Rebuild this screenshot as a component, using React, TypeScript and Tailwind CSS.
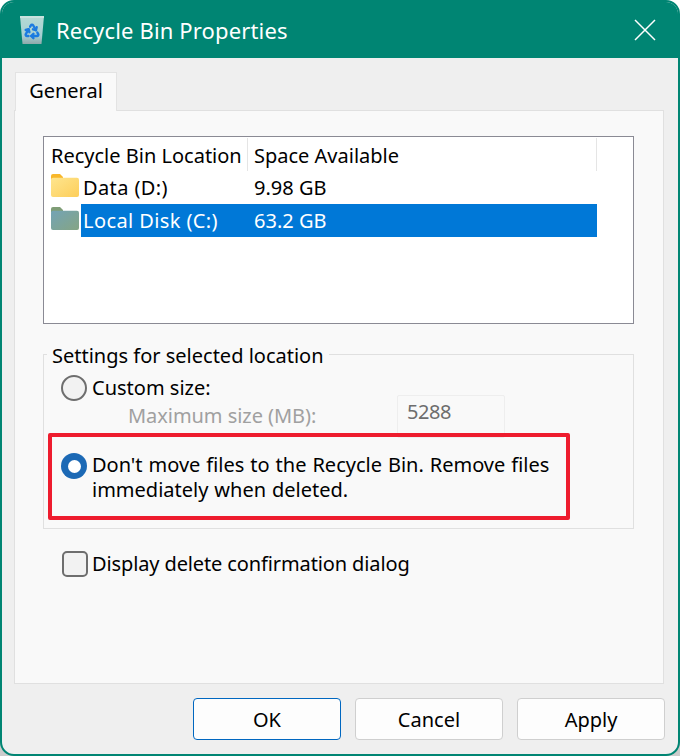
import React from 'react';

const FONT = "font-['Noto_Sans','Open_Sans',sans-serif]";

function BinIcon() {
  return (
    <svg width="26" height="30" viewBox="0 0 26 30" className="shrink-0">
      <defs>
        <linearGradient id="bin" x1="0" y1="0" x2="0" y2="1">
          <stop offset="0" stopColor="#b5dad5" />
          <stop offset="0.7" stopColor="#a6cfd3" />
          <stop offset="1" stopColor="#8fa9aa" />
        </linearGradient>
      </defs>
      <path d="M1 1h24l-2.500 28h-19z" fill="url(#bin)" />
      <path d="M1 1h24v2H1z" fill="#c8e2de" />
      <g
        transform="translate(4.500 7.500) scale(0.71)"
        fill="none"
        stroke="#1b7be0"
        strokeWidth="3.400"
        strokeLinecap="round"
        strokeLinejoin="round"
      >
        <path d="M7 19H4.815a1.830 1.830 0 0 1-1.570-.881 1.785 1.785 0 0 1-.004-1.784L7.196 9.500" />
        <path d="M11 19h8.203a1.830 1.830 0 0 0 1.556-.890 1.784 1.784 0 0 0 0-1.775l-1.226-2.120" />
        <path d="m14 16-3 3 3 3" />
        <path d="M8.293 13.596 7.196 9.500 3.100 10.598" />
        <path d="m9.344 5.811 1.093-1.892A1.830 1.830 0 0 1 11.985 3a1.784 1.784 0 0 1 1.546.888l3.943 6.843" />
        <path d="m13.378 9.633 4.096 1.098 1.097-4.096" />
      </g>
    </svg>
  );
}

function FolderIcon({ selected }: { selected?: boolean }) {
  const id = selected ? 'folderSel' : 'folderNorm';
  return (
    <svg
      width="28"
      height="23"
      viewBox="0 0 28 24"
      preserveAspectRatio="none"
      className="-mt-[4px] shrink-0"
    >
      <defs>
        <linearGradient id={id} x1="0" y1="0" x2="1" y2="1">
          <stop offset="0" stopColor={selected ? '#73a3b5' : '#fee58e'} />
          <stop offset="1" stopColor={selected ? '#85a584' : '#fdce5a'} />
        </linearGradient>
      </defs>
      <path
        d="M0 2a2 2 0 0 1 2-2h7l3 3v3H0z"
        fill={selected ? '#7f9d76' : '#f8b72a'}
      />
      <path
        d="M0 6a2 2 0 0 1 2-2h24a2 2 0 0 1 2 2v16a2 2 0 0 1-2 2H2a2 2 0 0 1-2-2z"
        fill={`url(#${id})`}
      />
    </svg>
  );
}

function ListRow({
  name,
  space,
  selected,
}: {
  name: string;
  space: string;
  selected?: boolean;
}) {
  return (
    <div className="flex h-[33px] items-center pl-[7px]">
      <FolderIcon selected={selected} />
      <div
        className={`ml-[2px] flex h-[33px] w-[516px] items-center pl-[2px] ${
          selected ? 'bg-[#0078d7] text-white' : 'text-black'
        }`}
      >
        <span className="w-[171px] whitespace-nowrap tracking-[0.4px]">
          {name}
        </span>
        <span className="whitespace-nowrap">{space}</span>
      </div>
    </div>
  );
}

function DialogButton({
  label,
  primary,
}: {
  label: string;
  primary?: boolean;
}) {
  return (
    <button
      type="button"
      className={`h-[42px] w-[148px] rounded-[4px] border bg-[#fdfdfd] pt-px text-black ${
        primary ? 'border-[#0067c0]' : 'border-[#cfcfcf]'
      }`}
    >
      {label}
    </button>
  );
}

export default function App() {
  return (
    <div
      className={`h-[756px] w-[680px] overflow-hidden bg-[linear-gradient(#ffffff_0%,#ffffff_50%,#cccccc_50%,#cccccc_100%)] text-[20px] leading-[28px] ${FONT}`}
    >
      <div className="flex h-[756px] flex-col overflow-hidden rounded-[14px] border-2 border-[#008573] bg-[#efefef]">
        {/* title bar */}
        <div className="flex h-[56px] shrink-0 items-center bg-[#008573] pl-[17px] pr-[22px] text-white">
          <BinIcon />
          <span className="ml-[11px] text-[22px] tracking-[0.15px]">
            Recycle Bin Properties
          </span>
          <svg
            width="22"
            height="22"
            viewBox="0 0 22 22"
            className="ml-auto"
            stroke="#ffffff"
            strokeWidth="1.500"
          >
            <path d="M1 1l20 20M21 1L1 21" />
          </svg>
        </div>

        <div className="flex flex-1 flex-col pl-[12px] pr-[14px] pt-[14px]">
          {/* tab strip */}
          <div className="flex h-[38px]">
            <div className="relative z-10 ml-px flex h-[39px] w-[102px] items-center justify-center border border-b-0 border-[#e3e3e3] bg-[#f9f9f9] pb-[2px] text-black">
              General
            </div>
          </div>

          {/* tab page */}
          <div className="h-[574px] w-[650px] border border-[#e0e0e0] bg-[#f9f9f9] pl-[28px] pt-[25px]">
            <div className="h-[188px] w-[591px] border border-[#8a8a94] bg-white text-black">
              <div className="flex h-[34px] items-center">
                <span className="w-[203px] whitespace-nowrap pl-[7px] pt-[3px]">
                  Recycle Bin Location
                </span>
                <span className="h-[33px] w-px bg-[#e5e5e5]" />
                <span className="w-[348px] whitespace-nowrap pl-[6px] pt-[3px]">
                  Space Available
                </span>
                <span className="h-[33px] w-px bg-[#e5e5e5]" />
              </div>
              <ListRow name="Data (D:)" space="9.98 GB" />
              <ListRow name="Local Disk (C:)" space="63.2 GB" selected />
            </div>

            {/* settings group */}
            <div className="relative mt-[30px] h-[175px] w-[591px] border border-[#e0e0e0] px-[17px] text-black">
              <span className="absolute left-[3px] top-[-13px] whitespace-nowrap bg-[#f9f9f9] px-[5px]">
                Settings for selected location
              </span>
              <div className="mt-[20px] flex h-[26px] items-center">
                <span className="size-[26px] shrink-0 rounded-full border-2 border-[#6e6e6e] bg-[#f2f2f2]" />
                <span className="ml-[5px] whitespace-nowrap">Custom size:</span>
              </div>
              <div className="flex h-[43px] items-start">
                <span className="ml-[67px] mt-[1px] w-[269px] whitespace-nowrap tracking-[-0.05px] text-[#a0a0a0]">
                  Maximum size (MB):
                </span>
                <div className="-mt-[6px] h-[43px] w-[108px] shrink-0 rounded-[2px] border border-[#eeeeee] pl-[9px] pt-[2px] tracking-[-0.4px] text-[#6d6d6d]">
                  5288
                </div>
              </div>
              <div className="mt-[8px] flex">
                <span className="mt-[1px] flex size-[26px] shrink-0 items-center justify-center rounded-full bg-[#1c69b5]">
                  <span className="size-[13px] rounded-full bg-white" />
                </span>
                <span className="ml-[5px] w-[480px] leading-[25px] [word-spacing:0.75px]">
                  Don't move files to the Recycle Bin. Remove files immediately
                  when deleted.
                </span>
              </div>
              {/* annotation drawn over the screenshot */}
              <div className="absolute left-[4px] top-[78px] h-[87px] w-[522px] rounded-[2px] border-[4px] border-[#ee1c2e]" />
            </div>

            <div className="ml-[19px] mt-[21px] flex items-center text-black">
              <span className="size-[26px] shrink-0 rounded-[5px] border-2 border-[#6e6e6e] bg-[#f2f2f2]" />
              <span className="ml-[4px] whitespace-nowrap tracking-[-0.12px]">
                Display delete confirmation dialog
              </span>
            </div>
          </div>

          {/* button row */}
          <div className="-mr-px mt-[14px] flex justify-end gap-[14px]">
            <DialogButton label="OK" primary />
            <DialogButton label="Cancel" />
            <DialogButton label="Apply" />
          </div>
        </div>
      </div>
    </div>
  );
}
